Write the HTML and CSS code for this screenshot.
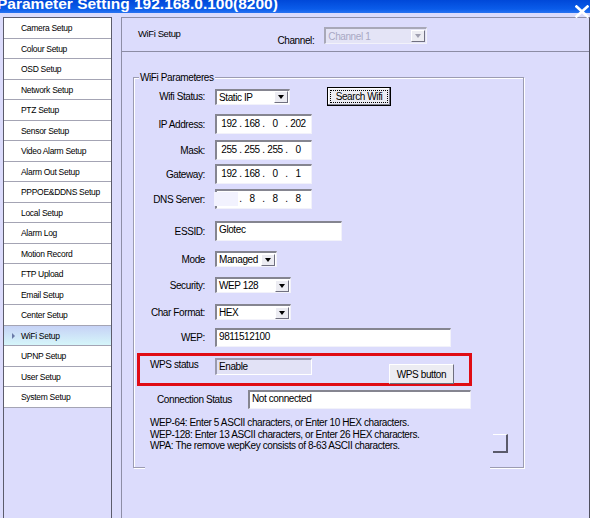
FILE: index.html
```html
<!DOCTYPE html>
<html>
<head>
<meta charset="utf-8">
<link rel="stylesheet" href="styles.css">
</head>
<body>
<header class="titlebar">
  <span class="title">Parameter Setting 192.168.0.100(8200)</span>
</header>
<svg class="close" width="14" height="13" viewBox="0 0 14 13"><path d="M1.5 1.5 L12.5 11.5 M12.5 1.5 L1.5 11.5" stroke="#fff" stroke-width="2.6" stroke-linecap="square"/></svg>
<div class="win">
  <nav class="side">
    <ul class="menu">
      <li>Camera Setup</li>
      <li>Colour Setup</li>
      <li>OSD Setup</li>
      <li>Network Setup</li>
      <li>PTZ Setup</li>
      <li>Sensor Setup</li>
      <li>Video Alarm Setup</li>
      <li>Alarm Out Setup</li>
      <li>PPPOE&amp;DDNS Setup</li>
      <li>Local Setup</li>
      <li>Alarm Log</li>
      <li>Motion Record</li>
      <li>FTP Upload</li>
      <li>Email Setup</li>
      <li>Center Setup</li>
      <li class="active">WiFi Setup</li>
      <li>UPNP Setup</li>
      <li>User Setup</li>
      <li>System Setup</li>
    </ul>
  </nav>
  <section class="main">
    <div class="head">
      <span class="head-title">WiFi Setup</span>
      <span class="ch-label">Channel:</span>
      <div class="select disabled ch"><span class="val">Channel 1</span><span class="dd"></span></div>
    </div>
    <div class="group">
      <span class="legend">WiFi Parameteres</span>
      <div class="row r1">
        <span class="lbl">Wifi Status:</span>
        <div class="select w74"><span class="val">Static IP</span><span class="dd"></span></div>
        <button class="btn focus">Search Wifi</button>
      </div>
      <div class="row g8">
        <span class="lbl">IP Address:</span>
        <div class="input ip"><span>192</span><i>.</i><span>168</span><i>.</i><span>0</span><i>.</i><span>202</span></div>
      </div>
      <div class="row g6">
        <span class="lbl">Mask:</span>
        <div class="input ip"><span>255</span><i>.</i><span>255</span><i>.</i><span>255</span><i>.</i><span>0</span></div>
      </div>
      <div class="row g4">
        <span class="lbl">Gateway:</span>
        <div class="input ip"><span>192</span><i>.</i><span>168</span><i>.</i><span>0</span><i>.</i><span>1</span></div>
      </div>
      <div class="row g5">
        <span class="lbl">DNS Server:</span>
        <div class="input ip"><span>8</span><i>.</i><span>8</span><i>.</i><span>8</span><i>.</i><span>8</span><b class="redact"></b></div>
      </div>
      <div class="row g12">
        <span class="lbl">ESSID:</span>
        <div class="input w127 top">Glotec</div>
      </div>
      <div class="row g10">
        <span class="lbl">Mode</span>
        <div class="select w62"><span class="val">Managed</span><span class="dd"></span></div>
      </div>
      <div class="row g10">
        <span class="lbl">Security:</span>
        <div class="select w75"><span class="val">WEP 128</span><span class="dd"></span></div>
      </div>
      <div class="row g11">
        <span class="lbl">Char Format:</span>
        <div class="select w75"><span class="val">HEX</span><span class="dd"></span></div>
      </div>
      <div class="row g8">
        <span class="lbl">WEP:</span>
        <div class="input w235 h19 top">9811512100</div>
      </div>
      <div class="wps">
        <span class="wps-lbl">WPS status</span>
        <div class="input ro">Enable</div>
        <button class="btn wps-btn">WPS button</button>
      </div>
      <div class="row conn">
        <span class="conn-lbl">Connection Status</span>
        <div class="input w222 h19 top">Not connected</div>
      </div>
      <div class="help-row">
        <p class="help">WEP-64: Enter 5 ASCII characters, or Enter 10 HEX characters.<br>WEP-128: Enter 13 ASCII characters, or Enter 26 HEX characters.<br>WPA: The remove wepKey consists of 8-63 ASCII characters.</p>
        <span class="stub"></span>
      </div>
    </div>
  </section>
</div>
</body>
</html>
```

FILE: styles.css
```css
* { box-sizing: border-box; }
html, body { margin: 0; padding: 0; }
body {
  width: 590px;
  height: 518px;
  overflow: hidden;
  position: relative;
  background: #dcdcfc;
  color: #000;
  font-family: "Liberation Sans", Arial, sans-serif;
  font-size: 10px;
  letter-spacing: -0.4px;
}

.titlebar {
  height: 13px;
  overflow: hidden;
  background: linear-gradient(#0048d8, #0a5cea 70%, #2a74f0);
}
.title {
  display: block;
  margin: -4px 0 0 -3px;
  font: bold 15.5px/15px "Liberation Sans", Arial, sans-serif;
  letter-spacing: 0;
  color: #fff;
  white-space: nowrap;
}
.close {
  position: absolute;
  left: 575px;
  top: 5px;
}

.win {
  display: flex;
  padding-top: 4px;
  height: 518px;
}

.side {
  margin-left: 3px;
  width: 109px;
  flex: none;
  border: 1px solid #5c5c6c;
  border-bottom: none;
}
.menu {
  list-style: none;
  margin: 0;
  padding: 0;
}
.menu li {
  height: 20.5px;
  line-height: 20px;
  padding-left: 17px;
  background: #fff;
  border-bottom: 1px solid #a4a4b4;
  font-size: 8.5px;
  letter-spacing: -0.3px;
  white-space: nowrap;
  position: relative;
}
.menu li.active {
  background: linear-gradient(#c6d2f6, #d6f6fa);
}
.menu li.active::before {
  content: "";
  position: absolute;
  left: 8px;
  top: 7px;
  border-left: 3px solid #6a7aa8;
  border-top: 3px solid transparent;
  border-bottom: 3px solid transparent;
}

.main {
  margin-left: 9px;
  flex: 1;
  border-left: 1px solid #8e8ea6;
  border-top: 1px solid #8e8ea6;
  border-right: 1px solid #50505e;
}

.head {
  height: 34px;
  border-bottom: 1px solid #8c8ca4;
  display: flex;
  align-items: flex-start;
}
.head-title {
  margin: 9px 0 0 16px;
  font-size: 9.5px;
  line-height: 13px;
}
.ch-label {
  margin: 16px 0 0 97px;
  line-height: 13px;
}
.select.ch {
  margin: 9px 0 0 10px;
  width: 103px;
  height: 17px;
}

.group {
  position: relative;
  margin: 25px 0 0 11px;
  width: 391px;
  height: 391px;
  border: 1px solid #9c9cb2;
  box-shadow: inset 1px 1px 0 #fff, 1px 1px 0 #fff;
  padding-top: 9px;
}
.legend {
  position: absolute;
  left: 5px;
  top: -7px;
  padding: 0 1px;
  background: #dcdcfc;
  line-height: 13px;
}

.row {
  display: flex;
  align-items: center;
}
.lbl {
  width: 71px;
  margin-right: 10px;
  text-align: right;
  white-space: nowrap;
}
.g4 { margin-top: 4px; }
.g5 { margin-top: 5px; }
.g6 { margin-top: 6px; }
.g8 { margin-top: 8px; }
.g10 { margin-top: 10px; }
.g11 { margin-top: 11px; }
.g12 { margin-top: 12px; }

.input, .select {
  position: relative;
  background: #fff;
  border-top: 2px solid #858590;
  border-left: 2px solid #858590;
  border-right: 1px solid #f2f2fa;
  border-bottom: 1px solid #f2f2fa;
  white-space: nowrap;
}
.input {
  height: 20px;
  width: 97px;
  padding-left: 2px;
  line-height: 16px;
}
.input.top { line-height: 14px; }
.h19 { height: 19px; }
.w127 { width: 127px; }
.w235 { width: 236px; }
.w222 { width: 223px; }

.ip {
  display: flex;
  padding-left: 3px;
}
.ip span {
  width: 18px;
  text-align: center;
}
.ip i {
  font-style: normal;
  width: 5px;
  text-align: center;
}
.redact {
  position: absolute;
  left: -3px;
  top: 1px;
  width: 24px;
  height: 14px;
  background: #f2f2fe;
}

.select {
  height: 16px;
  display: flex;
  align-items: center;
  padding-left: 2px;
  line-height: 13px;
}
.select .val { flex: 1; }
.select .dd {
  width: 14px;
  height: 12px;
  margin-right: 1px;
  background: #ececf2;
  border-top: 1px solid #fff;
  border-left: 1px solid #fff;
  border-right: 1px solid #707080;
  border-bottom: 1px solid #707080;
  position: relative;
}
.select .dd::after {
  content: "";
  position: absolute;
  left: 3px;
  top: 3px;
  border-top: 4px solid #000;
  border-left: 3.5px solid transparent;
  border-right: 3.5px solid transparent;
}
.w74 { width: 75px; }
.w62 { width: 62px; }
.w75 { width: 76px; }
.select.disabled {
  background: #e4e4f6;
  border-top-color: #a8a8b8;
  border-left-color: #a8a8b8;
  color: #a8a8c4;
}
.select.disabled .dd::after { border-top-color: #a0a0b0; }

.btn {
  font: inherit;
  letter-spacing: inherit;
  color: #000;
  padding: 0;
  background: #ececf2;
  border-top: 1px solid #fff;
  border-left: 1px solid #fff;
  border-right: 1px solid #6e6e7e;
  border-bottom: 1px solid #6e6e7e;
  white-space: nowrap;
}
.btn.focus {
  margin-left: 37px;
  width: 64px;
  height: 19px;
  border: 1px solid #000;
  outline: 1px dotted #000;
  outline-offset: -4px;
  box-shadow: inset -1px -1px 0 #808090, inset 1px 1px 0 #fff;
}
.r1 { height: 19px; }

.wps {
  display: flex;
  align-items: flex-start;
  margin: 6px 0 0 3px;
  width: 335px;
  height: 33px;
  border: 3px solid #e00c14;
}
.wps-lbl {
  width: 75px;
  padding-left: 10px;
  margin-top: 2px;
  line-height: 14px;
  white-space: nowrap;
}
.input.ro {
  margin-top: 2px;
  width: 97px;
  height: 17px;
  line-height: 14px;
  background: #e2e2f6;
  border-top: 2px solid #9a9aae;
  border-left: 2px solid #9a9aae;
  border-right: 1px solid #fff;
  border-bottom: 1px solid #fff;
}
.wps-btn {
  margin: 8px 0 0 77px;
  width: 65px;
  height: 20px;
}

.conn { margin-top: 1px; }
.conn-lbl {
  width: 114px;
  padding-left: 23px;
  white-space: nowrap;
  line-height: 22px;
  padding-top: 2px;
}

.help-row {
  display: flex;
  align-items: flex-start;
  margin-top: 5px;
}
.help {
  margin: 0 0 0 11px;
  width: 345px;
  height: 60px;
  padding: 1px 0 0 5px;
  background: #dcdcfc;
  line-height: 11.5px;
  white-space: nowrap;
}
.stub {
  margin: 18px 0 0 3px;
  width: 15px;
  height: 19px;
  border-top: 1px solid #fff;
  border-right: 2px solid #5a5a6a;
  border-bottom: 2px solid #5a5a6a;
}
```
